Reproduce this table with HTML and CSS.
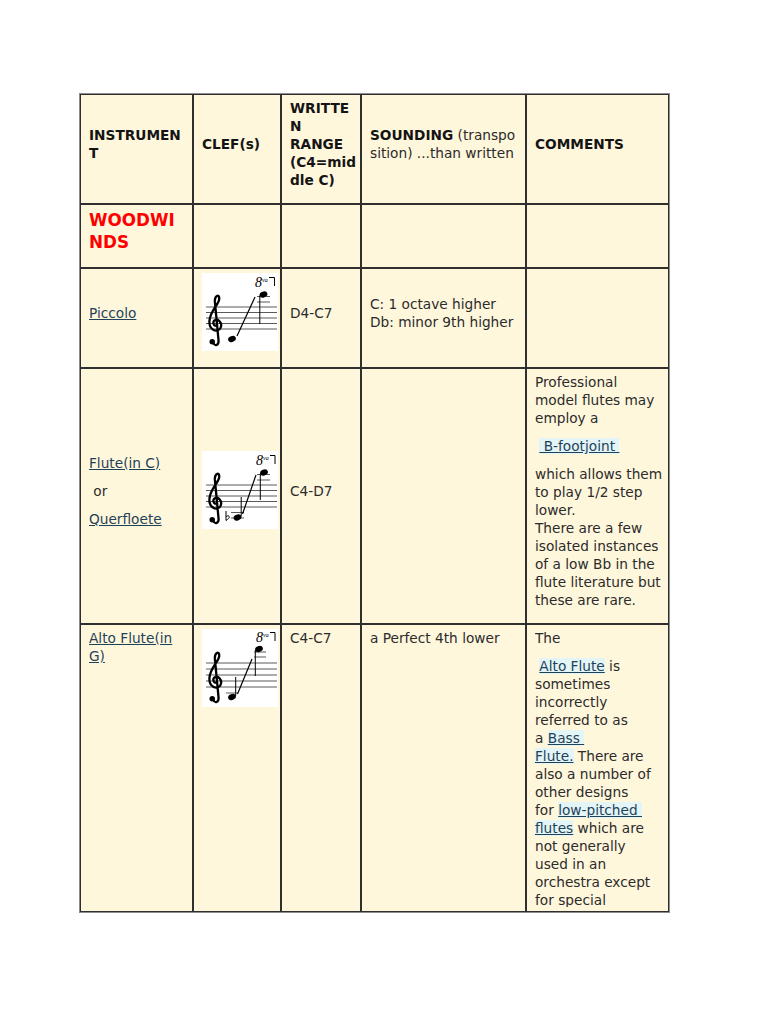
FILE: index.html
```html
<!DOCTYPE html>
<html lang="en">
<head>
<meta charset="utf-8">
<title>Orchestral instruments chart</title>
<link rel="stylesheet" href="styles.css">
</head>
<body>
<div class="page">
<table class="chart">
  <tr class="head">
    <td class="w1"><p><b>INSTRUMEN<br>T</b></p></td>
    <td class="w2"><p><b>CLEF(s)</b></p></td>
    <td class="w3"><p><b>WRITTE<br>N<br>RANGE<br>(C4=mid<br>dle C)</b></p></td>
    <td class="w4"><p><b>SOUNDING</b> (transpo<br>sition) ...than written</p></td>
    <td class="w5 com"><p><b>COMMENTS</b></p></td>
  </tr>
  <tr>
    <td><p class="group">WOODWI<br>NDS</p></td>
    <td class="clef"><p>&nbsp;</p></td>
    <td><p>&nbsp;</p></td>
    <td><p>&nbsp;</p></td>
    <td class="com"><p>&nbsp;</p></td>
  </tr>
  <tr>
    <td><p><a href="#">Piccolo</a></p></td>
    <td class="clef">
      <svg class="staff" viewBox="0 0 76 78" aria-label="Piccolo range">
        <rect width="76" height="78" fill="#fff"/>
        <g stroke="#5a5a5a" stroke-width="1">
          <line x1="4" y1="34" x2="75" y2="34"/><line x1="4" y1="39.5" x2="75" y2="39.5"/><line x1="4" y1="45" x2="75" y2="45"/><line x1="4" y1="50.5" x2="75" y2="50.5"/><line x1="4" y1="56" x2="75" y2="56"/>
          <line x1="55" y1="23.5" x2="68" y2="23.5"/><line x1="55" y1="29" x2="68" y2="29"/>
        </g>
        <g class="gclef" transform="translate(5.5,20) scale(1.05)">
          <path d="M5.5,47.5 C7,51 11,50 10.5,45 L7,8 C6.8,2.5 11,0.5 11.2,5 C11.5,11 2.5,16 1.8,27 C1.3,35 9.5,39 12.5,33 C14.5,28.5 10,24 7,26 C4.5,27.5 5.5,31 8,31.5"/>
          <circle cx="4.5" cy="46.5" r="2.6"/>
        </g>
        <ellipse cx="30" cy="66" rx="4" ry="2.9" transform="rotate(-22 30 66)"/>
        <line x1="35" y1="63" x2="53" y2="24" stroke="#000" stroke-width="1.2"/>
        <ellipse cx="61.5" cy="21.5" rx="4" ry="2.9" transform="rotate(-22 61.5 21.5)"/>
        <line x1="57.8" y1="22.5" x2="57.8" y2="51" stroke="#000" stroke-width="1"/>
        <text x="53" y="14" class="ottava">8<tspan dy="-5" font-size="6">va</tspan></text>
        <polyline points="67,4.5 72.5,4.5 72.5,13" fill="none" stroke="#000" stroke-width="1"/>
      </svg>
    </td>
    <td><p>D4-C7</p></td>
    <td><p>C: 1 octave higher<br>Db: minor 9th higher</p></td>
    <td class="com"><p>&nbsp;</p></td>
  </tr>
  <tr>
    <td>
      <p><a href="#">Flute(in C)</a></p>
      <p>&nbsp;or</p>
      <p><a href="#">Querfloete</a></p>
    </td>
    <td class="clef">
      <svg class="staff" viewBox="0 0 76 78" aria-label="Flute range">
        <rect width="76" height="78" fill="#fff"/>
        <g stroke="#5a5a5a" stroke-width="1">
          <line x1="4" y1="34" x2="75" y2="34"/><line x1="4" y1="39.5" x2="75" y2="39.5"/><line x1="4" y1="45" x2="75" y2="45"/><line x1="4" y1="50.5" x2="75" y2="50.5"/><line x1="4" y1="56" x2="75" y2="56"/>
          <line x1="55" y1="23.5" x2="68" y2="23.5"/><line x1="55" y1="29" x2="68" y2="29"/>
          <line x1="29" y1="61.5" x2="42" y2="61.5"/><line x1="29" y1="67" x2="42" y2="67"/>
        </g>
        <g class="gclef" transform="translate(5.5,20) scale(1.05)">
          <path d="M5.5,47.5 C7,51 11,50 10.5,45 L7,8 C6.8,2.5 11,0.5 11.2,5 C11.5,11 2.5,16 1.8,27 C1.3,35 9.5,39 12.5,33 C14.5,28.5 10,24 7,26 C4.5,27.5 5.5,31 8,31.5"/>
          <circle cx="4.5" cy="46.5" r="2.6"/>
        </g>
        <path d="M24,60 L24,69.5 C26.5,68 28,66.5 27,65.2 C26.2,64.3 24.8,65 24,66" fill="none" stroke="#000" stroke-width="1"/>
        <ellipse cx="35.5" cy="66.5" rx="4" ry="2.9" transform="rotate(-22 35.5 66.5)"/>
        <line x1="39.2" y1="65.5" x2="39.2" y2="46" stroke="#000" stroke-width="1"/>
        <line x1="40.5" y1="63" x2="54" y2="24" stroke="#000" stroke-width="1.2"/>
        <ellipse cx="62" cy="21.5" rx="4" ry="2.9" transform="rotate(-22 62 21.5)"/>
        <line x1="58.3" y1="22.5" x2="58.3" y2="49" stroke="#000" stroke-width="1"/>
        <text x="54" y="14" class="ottava">8<tspan dy="-5" font-size="6">va</tspan></text>
        <polyline points="68,4.5 73,4.5 73,13" fill="none" stroke="#000" stroke-width="1"/>
      </svg>
    </td>
    <td><p>C4-D7</p></td>
    <td><p>&nbsp;</p></td>
    <td class="com">
      <p>Professional<br>model flutes may<br>employ a</p>
      <p>&nbsp;<a href="#" class="hl">&nbsp;B-footjoint&nbsp;</a></p>
      <p>which allows them<br>to play 1/2 step<br>lower.<br>There are a few<br>isolated instances<br>of a low Bb in the<br>flute literature but<br>these are rare.</p>
    </td>
  </tr>
  <tr class="top">
    <td><p><a href="#">Alto Flute(in G)</a></p></td>
    <td class="clef">
      <svg class="staff" viewBox="0 0 76 78" aria-label="Alto flute range">
        <rect width="76" height="78" fill="#fff"/>
        <g stroke="#5a5a5a" stroke-width="1">
          <line x1="4" y1="34" x2="75" y2="34"/><line x1="4" y1="40" x2="75" y2="40"/><line x1="4" y1="46" x2="75" y2="46"/><line x1="4" y1="52" x2="75" y2="52"/><line x1="4" y1="58" x2="75" y2="58"/>
          <line x1="52" y1="23" x2="64" y2="23"/><line x1="52" y1="28" x2="64" y2="28"/>
          <line x1="24" y1="64" x2="36" y2="64"/>
        </g>
        <g class="gclef" transform="translate(5.5,21) scale(1.05)">
          <path d="M5.5,47.5 C7,51 11,50 10.5,45 L7,8 C6.8,2.5 11,0.5 11.2,5 C11.5,11 2.5,16 1.8,27 C1.3,35 9.5,39 12.5,33 C14.5,28.5 10,24 7,26 C4.5,27.5 5.5,31 8,31.5"/>
          <circle cx="4.5" cy="46.5" r="2.6"/>
        </g>
        <ellipse cx="30" cy="68" rx="4" ry="2.9" transform="rotate(-22 30 68)"/>
        <line x1="33.7" y1="67" x2="33.7" y2="48" stroke="#000" stroke-width="1"/>
        <line x1="35.5" y1="65" x2="50" y2="30" stroke="#000" stroke-width="1.2"/>
        <ellipse cx="57" cy="20" rx="4" ry="2.9" transform="rotate(-22 57 20)"/>
        <line x1="53.3" y1="21" x2="53.3" y2="47" stroke="#000" stroke-width="1"/>
        <text x="54" y="13" class="ottava">8<tspan dy="-5" font-size="6">va</tspan></text>
        <polyline points="68,3.5 73,3.5 73,12" fill="none" stroke="#000" stroke-width="1"/>
      </svg>
    </td>
    <td><p>C4-C7</p></td>
    <td><p>a Perfect 4th lower</p></td>
    <td class="com">
      <div class="clip">
        <p>The</p>
        <p class="last">&nbsp;<a href="#" class="hl">Alto Flute</a> is<br>sometimes<br>incorrectly<br>referred to as<br>a <a href="#" class="hl">Bass&nbsp;<br>Flute.</a> There are<br>also a number of<br>other designs<br>for <a href="#" class="hl">low-pitched&nbsp;<br>flutes</a> which are<br>not generally<br>used in an<br>orchestra except<br>for special</p>
      </div>
    </td>
  </tr>
</table>
</div>
</body>
</html>
```
FILE: styles.css
```css
body {
  margin: 0;
  background: #ffffff;
  font-family: "DejaVu Sans", Verdana, sans-serif;
  font-size: 13.7px;
  line-height: 18px;
  color: #2b2b2b;
}

.page {
  padding: 93px 0 0 79px;
}

.chart {
  width: 591px;
  table-layout: fixed;
  border-collapse: separate;
  border-spacing: 0;
  border: 1px solid #8c8c8c;
}

.chart td {
  box-sizing: border-box;
  border: 1px solid #2f2f2f;
  background: #fff7dc;
  padding: 4px 4px 4px 8px;
  vertical-align: middle;
}

.chart p {
  margin: 0 0 10px;
}

.chart b {
  color: #141414;
}

.w1 { width: 113px; }
.w2 { width: 88px; }
.w3 { width: 80px; }
.w4 { width: 165px; }
.w5 { width: 143px; }

.chart td.com {
  padding-right: 3px;
}

.chart td.clef {
  padding-right: 2px;
}

.staff {
  display: block;
  width: 76px;
  height: 78px;
  margin-bottom: 12px;
}

.gclef path {
  fill: none;
  stroke: #000;
  stroke-width: 2.2;
}

.ottava {
  font-family: "Liberation Serif", serif;
  font-style: italic;
  font-size: 14px;
  fill: #000;
}

.group {
  color: #ff0000;
  font-weight: bold;
  font-size: 16.8px;
  line-height: 22px;
}

.chart .group {
  margin-bottom: 10px;
}

a {
  color: #1f4258;
  text-decoration: underline;
}

a.hl {
  background: #e3f5f7;
}

.chart tr.top td {
  vertical-align: top;
}

.clip {
  height: 278px;
  overflow: hidden;
}

.chart p.last {
  margin-bottom: 0;
}
```
